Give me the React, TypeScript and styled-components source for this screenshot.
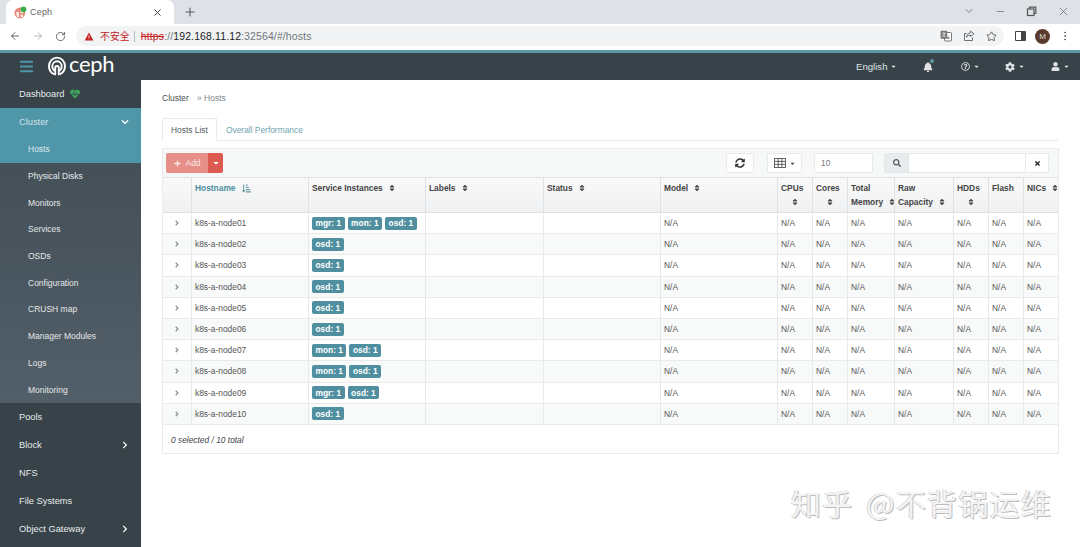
import React from "react";
import styled, { createGlobalStyle } from "styled-components";
import { ArrowLeft, ArrowRight, RotateCw, Star, MoreVertical, X, Minus, ChevronDown, Plus } from "lucide-react";
import {
  FaBars, FaHeartbeat, FaChevronDown, FaChevronRight, FaPlus, FaCaretDown, FaSyncAlt,
  FaSearch, FaTimes, FaBell, FaCog, FaUser, FaRegQuestionCircle, FaSort, FaAngleRight, FaSortAmountDownAlt,
} from "react-icons/fa";

const Global = createGlobalStyle`
  html, body { margin: 0; padding: 0; background: #fff; }
  body { font-family: "Liberation Sans", Arial, sans-serif; }
  * { box-sizing: border-box; }
`;

const Page = styled.div`
  width: 1080px; height: 547px; overflow: hidden; position: relative;
  display: flex; flex-direction: column; color: #333;
`;

/* browser */
const TabStrip = styled.div`
  height: 24px; background: #dee1e6; display: flex; align-items: flex-end; padding-left: 6px; flex: none;
`;
const Tab = styled.div`
  width: 168px; height: 24px; background: #fff; border-radius: 7px 7px 0 0;
  display: flex; align-items: center; padding: 0 11px 0 8px; font-size: 9px; color: #5f6368; letter-spacing: .2px;
`;
const TabTitle = styled.span`margin-left: 3px; flex: 1;`;
const NewTab = styled.div`width: 26px; height: 24px; display: flex; align-items: center; justify-content: center; color: #55585c; margin-left: 3px;`;
const WindowCtl = styled.div`
  margin-left: auto; display: flex; align-items: center; height: 22px; align-self: flex-start; color: #5f6368;
  gap: 20px; padding-right: 10px;
`;
const BrowserBar = styled.div`
  height: 26px; background: #fff; display: flex; align-items: center; padding: 0 9px 2px 9px; flex: none; color: #5f6368;
`;
const NavIcons = styled.div`display: flex; align-items: center; gap: 11px; margin-right: 10px;`;
const Omnibox = styled.div`
  flex: 1; height: 20px; border-radius: 10px; background: #f1f3f4; display: flex; align-items: center;
  padding: 0 7px 0 8px; font-size: 10.45px; color: #202124; letter-spacing: .14px;
`;
const Insecure = styled.span`color: #c5221f; margin-left: 6px; font-family: "Noto Sans CJK SC", sans-serif; font-size: 9.8px;`;
const Sep = styled.span`width: 1px; height: 11px; background: #bbb; margin: 0 6px 0 4px;`;
const Strike = styled.span`color: #c5221f; text-decoration: line-through;`;
const Dim = styled.span`color: #70757a;`;
const OmniRight = styled.div`margin-left: auto; display: flex; align-items: center; gap: 11px; color: #5f6368;`;
const BarRight = styled.div`display: flex; align-items: center; margin-left: 11px; gap: 9px;`;
const Avatar = styled.div`
  width: 15px; height: 15px; border-radius: 50%; background: #5b3a2e; color: #ddd; font-size: 8px;
  display: flex; align-items: center; justify-content: center;
`;
const PanelIcon = styled.div`
  width: 11px; height: 10px; border: 1.5px solid #444; border-right-width: 5px; border-radius: 1px;
`;

const Stripe = styled.div`height: 3px; background: #5b9aa5; flex: none;`;
const Navbar = styled.div`
  height: 27px; background: #374249; display: flex; align-items: center; flex: none; color: #e3e6e8; position: relative;
`;
const Burger = styled.div`color: #4f97a8; margin-left: 19px; width: 15px; height: 16px; display: flex; align-items: center; margin-top: -1px;`;
const Logo = styled.div`
  display: flex; align-items: center; color: #fff; margin-left: 14px; gap: 3px; margin-top: -2px;
`;
const LogoText = styled.span`font-family: "Lato", sans-serif; font-weight: 400; font-size: 22px; letter-spacing: -.3px; line-height: 22px; margin-top: -3px;`;
const NavMenu = styled.div`margin-left: auto; display: flex; align-items: center; font-size: 9.6px;`;
const NavItem = styled.div<{ $w: number }>`
  width: ${(p) => p.$w}px; display: flex; align-items: center; gap: 3px; color: #dfe3e5;
  position: relative;
`;
const Dot = styled.span`
  position: absolute; width: 4px; height: 4px; background: #5b9aa5; border-radius: 50%; left: 7px; top: -3px;
`;

const Body = styled.div`flex: 1; display: flex; min-height: 0;`;
const Sidebar = styled.nav`
  width: 141px; background: #374249; flex: none; font-size: 9.3px; color: #e8ebec; overflow: hidden;
`;
const MainItem = styled.div<{ $active?: boolean }>`
  height: 28px; display: flex; align-items: center; padding: 0 5px 0 19px; justify-content: space-between;
  background: ${(p) => (p.$active ? "#4f97a8" : "transparent")};
  color: ${(p) => (p.$active ? "#cfe3e8" : "#e8ebec")};
`;
const Label = styled.span`display: flex; align-items: center; gap: 6px;`;
const Caret = styled.span`width: 16px; display: flex; justify-content: center; margin-right: 3px; color: #fff;`;
const SubMenu = styled.div`background: linear-gradient(180deg, #434e56 0%, #525f69 100%);`;
const SubItem = styled.div<{ $active?: boolean }>`
  height: 26.7px; display: flex; align-items: center; padding-left: 28px; font-size: 8.5px;
  background: ${(p) => (p.$active ? "#4f97a8" : "transparent")};
  color: ${(p) => (p.$active ? "#dcebef" : "#e4e7e9")};
`;

const Main = styled.main`flex: 1; padding: 11px 22px 0 21px; min-width: 0;`;
const Breadcrumb = styled.div`font-size: 8.5px; color: #4b4f53; height: 14px; display: flex; align-items: center; margin-bottom: 13px;`;
const Crumb = styled.span`color: #80868b; margin-left: 8px;`;
const Tabs = styled.div`display: flex; height: 23px; border-bottom: 1px solid #e6e8ea; font-size: 8.4px; margin-bottom: 7px;`;
const TabLink = styled.div<{ $active?: boolean }>`
  padding: 0 9px; display: flex; align-items: center; height: 23px;
  color: ${(p) => (p.$active ? "#555b60" : "#6fa3b0")};
  ${(p) => p.$active && `background:#fff;border:1px solid #e6e8ea;border-bottom-color:#fff;border-radius:2px 2px 0 0;width:55px;padding:0 8px;`}
`;
const Table = styled.div`border: 1px solid #e9ebec; width: 897px;`;
const Toolbar = styled.div`
  height: 29px; background: #f7f8f8; border-bottom: 1px solid #dfe2e4; display: flex; align-items: center; padding: 0 9px 0 3px;
`;
const AddGroup = styled.div`display: flex; height: 20px; border-radius: 2px; overflow: hidden; color: #fff; font-size: 8.4px;`;
const AddBtn = styled.div`width: 42px; background: #e58f88; display: flex; align-items: center; justify-content: center; gap: 5px; color: #fbe9e7;`;
const AddCaret = styled.div`width: 15px; background: #dc5a4f; display: flex; align-items: center; justify-content: center;`;
const ToolGroup = styled.div`margin-left: auto; display: flex; align-items: center;`;
const ToolBtn = styled.div<{ $w: number; $ml?: number }>`
  width: ${(p) => p.$w}px; height: 20px; background: #fff; border: 1px solid #e7e9ea; border-radius: 2px; margin-left: ${(p) => p.$ml ?? 0}px;
  display: flex; align-items: center; justify-content: center; gap: 3px; color: #333;
`;
const PageSize = styled.div`
  width: 59px; height: 20px; background: #fff; border: 1px solid #e7e9ea; margin-left: 12px; border-radius: 2px;
  font-size: 8.4px; color: #777; display: flex; align-items: center; padding-left: 6px;
`;
const SearchAddon = styled.div`
  width: 25px; height: 20px; margin-left: 11px; background: #e9ecef; border: 1px solid #e3e5e7;
  display: flex; align-items: center; justify-content: center; color: #555; border-radius: 2px 0 0 2px;
`;
const SearchInput = styled.div`width: 116px; height: 20px; background: #fff; border-top: 1px solid #e7e9ea; border-bottom: 1px solid #e7e9ea;`;
const ClearBtn = styled.div`
  width: 24px; height: 20px; background: #fff; border: 1px solid #e7e9ea; border-radius: 0 2px 2px 0;
  display: flex; align-items: center; justify-content: center; color: #222;
`;
const cols = "28px 117px 117px 118px 117px 117px 35px 35px 47px 59px 35px 35px 35px";
const HeadRow = styled.div`
  display: grid; grid-template-columns: ${cols}; height: 35px;
  background: linear-gradient(180deg, #f9f9fa 0%, #eff0f1 100%); border-bottom: 1px solid #dcdfe1;
`;
const HeadCell = styled.div<{ $color?: string }>`
  border-left: 1px solid #dfe2e4; padding: 3px 3px 0; font-size: 8.4px; font-weight: bold; line-height: 14px;
  color: ${(p) => p.$color ?? "#444"}; overflow: hidden; white-space: nowrap; position: relative;
  &:first-child { border-left: 0; }
`;
const HeadLine = styled.div`display: flex; align-items: center; gap: 6px; height: 14px;`;
const CenterIcon = styled.div`display: flex; justify-content: center; height: 14px; align-items: center;`;
const SortIcon = styled.span`display: inline-flex; color: #444; margin-left: 5px; vertical-align: -1px;`;
const Row = styled.div<{ $alt: boolean }>`
  display: grid; grid-template-columns: ${cols}; height: 21.2px; background: ${(p) => (p.$alt ? "#f8f9f9" : "#fff")};
  border-bottom: 1px solid #e8eaeb;
`;
const Cell = styled.div`
  border-left: 1px solid #e6e8e9; padding: 0 3px; font-size: 8.4px; color: #555; display: flex; align-items: center; gap: 3px; white-space: nowrap; overflow: hidden;
  &:first-child { border-left: 0; justify-content: center; color: #8a8f93; padding: 0 1px 0 0; }
`;
const Badge = styled.span`
  background: #4f8f9f; color: #fff; font-weight: bold; font-size: 8.4px; height: 13px; padding: 0 3.5px;
  border-radius: 2px; display: inline-flex; align-items: center;
`;
const Footer = styled.div`
  height: 28px; display: flex; align-items: center; padding: 3px 0 0 8px; font-size: 8.4px; font-style: italic; color: #444;
`;
const Watermark = styled.div`
  position: absolute; left: 791px; top: 483px; font-family: "Noto Sans CJK SC", sans-serif; font-size: 30px; line-height: 38px;
  color: #f3f3f3; letter-spacing: 1.2px; word-spacing: 5px; white-space: nowrap;
  text-shadow: 1px 1px 0 #bdbdbd, -1px 0 0 #d6d6d6;
`;

const CephMark = () => (
  <svg width="18" height="20" viewBox="0 0 18 20" fill="none" stroke="#fff" strokeWidth="1.9" strokeLinecap="round">
    <path d="M5.6 18C2.8 16.5 1 13.6 1 10.2 1 5.5 4.6 1.6 9 1.6s8 3.9 8 8.6c0 3.4-1.8 6.3-4.6 7.8" />
    <path d="M6.2 14.6C5 13.6 4.3 12 4.3 10.4 4.3 7.6 6.4 5.3 9 5.3s4.7 2.3 4.7 5.1c0 1.6-.7 3.2-1.9 4.2" />
    <path d="M7.2 18.4v-6.6a1.8 1.8 0 0 1 3.6 0v6.6" />
  </svg>
);

const Favicon = () => (
  <svg width="13" height="13" viewBox="0 0 13 13">
    <circle cx="5.8" cy="7" r="5.4" fill="#e58a78" />
    <path d="M2 6h3v5H3zM6.5 4h3v3h-3zM6.5 8.5h2.5v2.5H6.5z" fill="#fff" opacity=".8" />
    <circle cx="9.5" cy="3.3" r="2.9" fill="#3fae49" />
  </svg>
);

const TranslateIcon = () => (
  <svg width="12" height="12" viewBox="0 0 12 12" fill="none">
    <rect x="4.5" y="2.5" width="7" height="8.5" rx=".8" fill="#fff" stroke="#666" strokeWidth=".9" />
    <rect x=".6" y=".8" width="6.6" height="8" rx=".8" fill="#777" />
    <path d="M2.2 3.3h3.4M3.9 2.4v.9M5 3.3C4.6 5 3.4 6.2 2.2 6.8M3 4.6c.5 1 1.3 1.8 2.6 2.2" stroke="#fff" strokeWidth=".7" />
    <path d="M7.3 9l1-2.6 1 2.6M7.7 8.2h1.3" stroke="#666" strokeWidth=".7" />
  </svg>
);

const ShareIcon = () => (
  <svg width="12" height="12" viewBox="0 0 12 12" fill="none" stroke="#6b6f73" strokeWidth="1">
    <path d="M9.5 7.5v3h-8v-7h2.2" />
    <path d="M7.4 1 11 3.8 7.4 6.6V5C5.6 5 4.4 5.7 3.6 7.3 3.8 5 5 3 7.4 2.7z" />
  </svg>
);

const GridIcon = () => (
  <svg width="12" height="10" viewBox="0 0 12 10" fill="none" stroke="#555" strokeWidth=".9">
    <rect x=".5" y=".5" width="11" height="9" />
    <path d="M.5 3.4h11M.5 6.4h11M4.2 .5v9M7.9 .5v9" />
  </svg>
);

const hosts: [string, string[]][] = [
  ["k8s-a-node01", ["mgr: 1", "mon: 1", "osd: 1"]],
  ["k8s-a-node02", ["osd: 1"]],
  ["k8s-a-node03", ["osd: 1"]],
  ["k8s-a-node04", ["osd: 1"]],
  ["k8s-a-node05", ["osd: 1"]],
  ["k8s-a-node06", ["osd: 1"]],
  ["k8s-a-node07", ["mon: 1", "osd: 1"]],
  ["k8s-a-node08", ["mon: 1", "osd: 1"]],
  ["k8s-a-node09", ["mgr: 1", "osd: 1"]],
  ["k8s-a-node10", ["osd: 1"]],
];
const subs = ["Hosts", "Physical Disks", "Monitors", "Services", "OSDs", "Configuration", "CRUSH map", "Manager Modules", "Logs", "Monitoring"];
const Sort = () => <SortIcon><FaSort size={8} /></SortIcon>;

export default function App() {
  return (
    <Page>
      <Global />
      <TabStrip>
        <Tab>
          <Favicon />
          <TabTitle>Ceph</TabTitle>
          <X size={11} strokeWidth={2} color="#333" />
        </Tab>
        <NewTab><Plus size={14} strokeWidth={1.8} /></NewTab>
        <WindowCtl>
          <ChevronDown size={12} strokeWidth={1.5} />
          <Minus size={11} strokeWidth={1.5} />
          <svg width="11" height="11" viewBox="0 0 11 11" fill="none" stroke="#555" strokeWidth="1.2"><rect x="1.5" y="3" width="6.5" height="6.5" /><path d="M3.5 3V1.2h6.3v6.3H8" /></svg>
          <X size={13} strokeWidth={1.3} />
        </WindowCtl>
      </TabStrip>
      <BrowserBar>
        <NavIcons>
          <ArrowLeft size={12} strokeWidth={2} />
          <ArrowRight size={12} strokeWidth={2} color="#b6b9bd" />
          <RotateCw size={11} strokeWidth={2} />
        </NavIcons>
        <Omnibox>
          <svg width="10" height="9" viewBox="0 0 10 10"><path d="M5 .6 9.8 9.4H.2z" fill="#c5221f" /><path d="M4.6 3.6h.8v3h-.8zM4.6 7.2h.8V8h-.8z" fill="#fff" /></svg>
          <Insecure>不安全</Insecure>
          <Sep />
          <Strike>https</Strike><Dim>://</Dim>192.168.11.12<Dim>:32564/#/hosts</Dim>
          <OmniRight>
            <TranslateIcon />
            <ShareIcon />
            <Star size={11} strokeWidth={1.7} color="#444" />
          </OmniRight>
        </Omnibox>
        <BarRight>
          <PanelIcon />
          <Avatar>M</Avatar>
          <MoreVertical size={12} strokeWidth={2} />
        </BarRight>
      </BrowserBar>
      <Stripe />
      <Navbar>
        <Burger><FaBars size={15} /></Burger>
        <Logo>
          <CephMark />
          <LogoText>ceph</LogoText>
        </Logo>
        <NavMenu>
          <NavItem $w={67}>English <FaCaretDown size={7} /></NavItem>
          <NavItem $w={38}><FaBell size={10} /><Dot /></NavItem>
          <NavItem $w={44}><FaRegQuestionCircle size={9} /><FaCaretDown size={7} /></NavItem>
          <NavItem $w={46}><FaCog size={10} /><FaCaretDown size={7} /></NavItem>
          <NavItem $w={29}><FaUser size={9} /><FaCaretDown size={7} /></NavItem>
        </NavMenu>
      </Navbar>
      <Body>
        <Sidebar>
          <MainItem><Label>Dashboard <FaHeartbeat size={10} color="#3fa35b" /></Label></MainItem>
          <MainItem $active><Label>Cluster</Label><Caret><FaChevronDown size={8} /></Caret></MainItem>
          <SubMenu>
            {subs.map((s, i) => <SubItem key={s} $active={i === 0}>{s}</SubItem>)}
          </SubMenu>
          <MainItem><Label>Pools</Label></MainItem>
          <MainItem><Label>Block</Label><Caret><FaChevronRight size={8} /></Caret></MainItem>
          <MainItem><Label>NFS</Label></MainItem>
          <MainItem><Label>File Systems</Label></MainItem>
          <MainItem><Label>Object Gateway</Label><Caret><FaChevronRight size={8} /></Caret></MainItem>
        </Sidebar>
        <Main>
          <Breadcrumb>Cluster<Crumb>» Hosts</Crumb></Breadcrumb>
          <Tabs>
            <TabLink $active>Hosts List</TabLink>
            <TabLink>Overall Performance</TabLink>
          </Tabs>
          <Table>
            <Toolbar>
              <AddGroup>
                <AddBtn><FaPlus size={7} />Add</AddBtn>
                <AddCaret><FaCaretDown size={8} /></AddCaret>
              </AddGroup>
              <ToolGroup>
                <ToolBtn $w={28}><FaSyncAlt size={10} /></ToolBtn>
                <ToolBtn $w={35} $ml={13}><GridIcon /><FaCaretDown size={7} color="#444" /></ToolBtn>
                <PageSize>10</PageSize>
                <SearchAddon><FaSearch size={8} /></SearchAddon>
                <SearchInput />
                <ClearBtn><FaTimes size={7} /></ClearBtn>
              </ToolGroup>
            </Toolbar>
            <HeadRow>
              <HeadCell />
              <HeadCell $color="#4f8f9f"><HeadLine>Hostname <FaSortAmountDownAlt size={9} color="#6d9ba7" /></HeadLine></HeadCell>
              <HeadCell>Service Instances<Sort /></HeadCell>
              <HeadCell>Labels<Sort /></HeadCell>
              <HeadCell>Status<Sort /></HeadCell>
              <HeadCell>Model<Sort /></HeadCell>
              <HeadCell>CPUs<CenterIcon><FaSort size={8} /></CenterIcon></HeadCell>
              <HeadCell>Cores<CenterIcon><FaSort size={8} /></CenterIcon></HeadCell>
              <HeadCell>Total<br />Memory<Sort /></HeadCell>
              <HeadCell>Raw<br />Capacity<Sort /></HeadCell>
              <HeadCell>HDDs<CenterIcon><FaSort size={8} /></CenterIcon></HeadCell>
              <HeadCell>Flash</HeadCell>
              <HeadCell>NICs<Sort /></HeadCell>
            </HeadRow>
            {hosts.map(([name, badges], i) => (
              <Row key={name} $alt={i % 2 === 1}>
                <Cell><FaAngleRight size={8} /></Cell>
                <Cell>{name}</Cell>
                <Cell>{badges.map((b) => <Badge key={b}>{b}</Badge>)}</Cell>
                <Cell />
                <Cell />
                <Cell>N/A</Cell>
                <Cell>N/A</Cell>
                <Cell>N/A</Cell>
                <Cell>N/A</Cell>
                <Cell>N/A</Cell>
                <Cell>N/A</Cell>
                <Cell>N/A</Cell>
                <Cell>N/A</Cell>
              </Row>
            ))}
            <Footer>0 selected / 10 total</Footer>
          </Table>
        </Main>
      </Body>
      <Watermark>知乎 @不背锅运维</Watermark>
    </Page>
  );
}
